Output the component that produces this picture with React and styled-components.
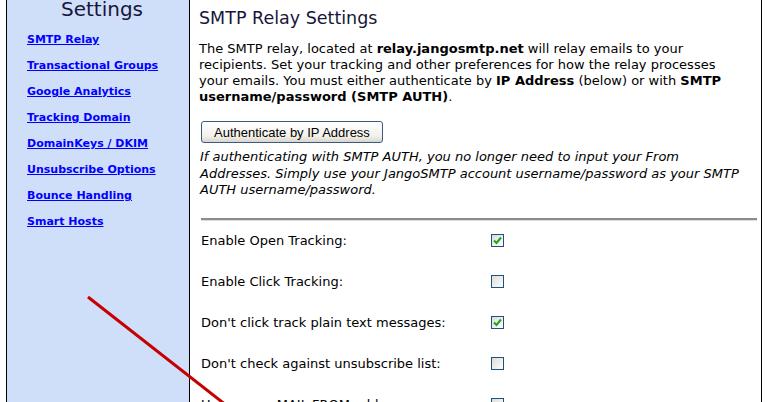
import React from "react";
import styled, { createGlobalStyle } from "styled-components";

const GlobalStyle = createGlobalStyle`
  html, body {
    margin: 0;
    padding: 0;
    background: #ffffff;
    overflow: hidden;
  }
  body {
    font-family: "DejaVu Sans", Verdana, sans-serif;
    color: #000;
  }
`;

const Page = styled.div`
  position: relative;
  width: 767px;
  height: 402px;
  overflow: hidden;
  padding-left: 6px;
  box-sizing: border-box;
`;

const Frame = styled.div`
  display: flex;
  width: 754px;
  min-height: 460px;
  border-left: 1px solid #000;
  border-right: 1px solid #000;
`;

// Sidebar
const Sidebar = styled.div`
  width: 182px;
  flex: none;
  background-color: #d0dff9;
  border-right: 1px solid #000;
`;

const SideTitle = styled.h2`
  margin: -2px 0 0;
  font-size: 20px;
  font-weight: normal;
  line-height: 23px;
  color: #16163a;
  text-align: center;
  padding-left: 8px;
`;

const SideNav = styled.nav`
  display: flex;
  flex-direction: column;
  padding: 12px 0 0 20px;
`;

const SideLink = styled.a`
  display: block;
  height: 26px;
  font-size: 11px;
  font-weight: bold;
  line-height: 13px;
  color: #0000ff;
  text-decoration: underline;
`;

// Main area
const Main = styled.div`
  flex: 1;
  padding: 0 4px 0 9px;
  font-size: 13px;
`;

const Title = styled.h1`
  margin: 6px 0 0;
  font-size: 17.5px;
  font-weight: normal;
  line-height: 24px;
  color: #16163a;
`;

const Intro = styled.div`
  padding-right: 14px;
`;

const Para = styled.p`
  margin: 11px 0 0;
  line-height: 16px;
`;

const Button = styled.button`
  margin: 16px 0 0 2px;
  height: 22px;
  padding: 0 12px;
  font-family: "Liberation Sans", Arial, sans-serif;
  font-size: 13px;
  color: #000;
  border: 1px solid #3c5a80;
  border-radius: 3px;
  background: linear-gradient(#ffffff, #f2f1ea 70%, #d8d6cb);
`;

const Note = styled.p`
  margin: 6px 0 0 1px;
  font-style: italic;
  line-height: 16.5px;
`;

const Rule = styled.hr`
  margin: 19px 0 0 2px;
  border: 0;
  border-top: 2px solid #8c8c8c;
  border-bottom: 1px solid #dedede;
`;

const Options = styled.div`
  display: grid;
  grid-template-columns: 290px auto;
  grid-auto-rows: 41px;
  padding: 5px 0 0 2px;
`;

const Label = styled.div`
  display: flex;
  align-items: center;
  height: 30px;
`;

const BoxCell = styled.div`
  display: flex;
  align-items: center;
  height: 30px;
`;

const Box = styled.span`
  display: flex;
  align-items: center;
  justify-content: center;
  width: 11px;
  height: 11px;
  border: 1px solid #1c5180;
  background: linear-gradient(135deg, #dcdcd6, #ffffff);
`;

const Overlay = styled.svg`
  position: absolute;
  left: 0;
  top: 0;
  pointer-events: none;
`;

const Check = () => (
  <svg width="9" height="9" viewBox="0 0 9 9">
    <path d="M1 4.5 L3.5 7 L8 1.5" fill="none" stroke="#21a121" strokeWidth="2" />
  </svg>
);

const links = [
  "SMTP Relay",
  "Transactional Groups",
  "Google Analytics",
  "Tracking Domain",
  "DomainKeys / DKIM",
  "Unsubscribe Options",
  "Bounce Handling",
  "Smart Hosts",
];

const options = [
  { label: "Enable Open Tracking:", on: true },
  { label: "Enable Click Tracking:", on: false },
  { label: "Don't click track plain text messages:", on: true },
  { label: "Don't check against unsubscribe list:", on: false },
  { label: "Use source MAIL FROM address:", on: false },
];

const App = () => {
  return (
    <Page>
      <GlobalStyle />
      <Frame>
        <Sidebar>
          <SideTitle>Settings</SideTitle>
          <SideNav>
            {links.map((l) => (
              <SideLink key={l} href="#">
                {l}
              </SideLink>
            ))}
          </SideNav>
        </Sidebar>
        <Main>
          <Title>SMTP Relay Settings</Title>
          <Intro>
            <Para>
              The SMTP relay, located at <b>relay.jangosmtp.net</b> will relay
              emails to your recipients. Set your tracking and other preferences
              for how the relay processes your emails. You must either
              authenticate by <b>IP Address</b> (below) or with{" "}
              <b>SMTP username/password (SMTP AUTH)</b>.
            </Para>
            <Button>Authenticate by IP Address</Button>
            <Note>
              If authenticating with SMTP AUTH, you no longer need to input your
              From Addresses. Simply use your JangoSMTP account
              username/password as your SMTP AUTH username/password.
            </Note>
          </Intro>
          <Rule />
          <Options>
            {options.map((o) => (
              <React.Fragment key={o.label}>
                <Label>{o.label}</Label>
                <BoxCell>
                  <Box>{o.on && <Check />}</Box>
                </BoxCell>
              </React.Fragment>
            ))}
          </Options>
        </Main>
      </Frame>
      <Overlay width="767" height="402">
        <line x1="88" y1="297" x2="240" y2="416" stroke="#c40000" strokeWidth="3" />
      </Overlay>
    </Page>
  );
};

export default App;
